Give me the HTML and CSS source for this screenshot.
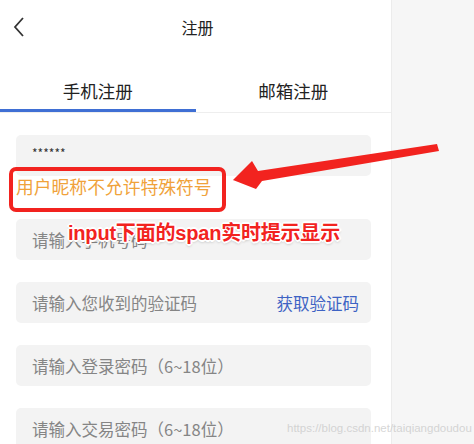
FILE: index.html
```html
<!DOCTYPE html>
<html>

<head>
    <meta charset="utf-8">
    <title>注册</title>
    <link rel="stylesheet" href="styles.css">
</head>

<body>
    <div class="page">
        <div class="phone">
            <div class="header">
                <svg class="back" width="14" height="22" viewBox="0 0 14 22">
                    <path d="M11 2 L3 11 L11 20" fill="none" stroke="#333" stroke-width="1.8" />
                </svg>
                <h2>注册</h2>
            </div>
            <div class="tabs">
                <div class="tab active">手机注册</div>
                <div class="tab">邮箱注册</div>
            </div>
            <div class="form">
                <div class="input-box">
                    <input type="text" class="nickname" value="******">
                </div>
                <span class="tip">用户昵称不允许特殊符号</span>
                <div class="input-box">
                    <input type="text" placeholder="请输入手机号码">
                </div>
                <div class="input-box">
                    <input type="text" placeholder="请输入您收到的验证码">
                    <a href="#">获取验证码</a>
                </div>
                <div class="input-box">
                    <input type="password" placeholder="请输入登录密码（6~18位）">
                </div>
                <div class="input-box">
                    <input type="password" placeholder="请输入交易密码（6~18位）">
                </div>
            </div>

            <!-- 标注 -->
            <div class="mark-box"></div>
            <p class="mark-text">input下面的span实时提示显示</p>
        </div>
        <div class="side"></div>
        <svg class="arrow" width="474" height="444" viewBox="0 0 474 444">
            <polygon points="233,180 252,161 258,171 437,144 439,151 262,181 256,189" fill="#f2231f" />
        </svg>
        <p class="watermark">https://blog.csdn.net/taiqiangdoudou</p>
    </div>
</body>
</html>
```

FILE: styles.css
```css
* {
    margin: 0;
    padding: 0;
    box-sizing: border-box;
}
body {
    background: #fff;
    font-family: "Noto Sans CJK SC", "Noto Sans", sans-serif;
}
.page {
    position: relative;
    display: flex;
    width: 474px;
    height: 444px;
    overflow: hidden;
}
.phone {
    position: relative;
    width: 391px;
    background: #fff;
}
.side {
    flex: 1;
    background: #f6f6f6;
    border-left: 1px solid #ececec;
}
.header {
    position: relative;
    height: 54px;
    display: flex;
    align-items: center;
    justify-content: center;
}
.header .back {
    position: absolute;
    left: 12px;
    top: 16px;
}
.header h2 {
    font-size: 16px;
    font-weight: normal;
    color: #222;
    margin-left: 4px;
}
.tabs {
    display: flex;
    margin-top: 19px;
    border-bottom: 1px solid #eee;
}
.tabs .tab {
    flex: 1;
    text-align: center;
    font-size: 17.5px;
    color: #222;
    height: 39px;
    line-height: 36px;
}
.tabs .tab.active {
    border-bottom: 3px solid #3f6fd4;
    margin-bottom: -1px;
}
.form {
    padding: 22px 20px 0 16px;
}
.input-box {
    display: flex;
    align-items: center;
    height: 41px;
    padding: 0 12px 0 16px;
    margin-bottom: 22px;
    background: #f3f3f3;
    border-radius: 5px;
}
.input-box input {
    flex: 1;
    min-width: 0;
    border: none;
    outline: none;
    background: transparent;
    font-family: inherit;
    font-size: 16.5px;
    color: #333;
}
.input-box input::placeholder {
    color: #858585;
}
.input-box .nickname {
    font-size: 12px;
    margin-top: -6px;
}
.input-box a {
    text-decoration: none;
    color: #3e63c4;
    font-size: 16.5px;
}
.form .tip {
    display: block;
    height: 21px;
    line-height: 21px;
    margin: -22px 0 22px 0;
    color: #f0a23a;
    font-size: 17.8px;
}
.mark-box {
    position: absolute;
    left: 9px;
    top: 167px;
    width: 217px;
    height: 45px;
    border: 4px solid #f2231f;
    border-radius: 7px;
}
.mark-text {
    position: absolute;
    left: 68px;
    top: 217px;
    font-size: 20px;
    font-weight: bold;
    color: #f2231f;
    letter-spacing: -0.2px;
    text-shadow: 2px 0 0 #fff, -2px 0 0 #fff, 0 2px 0 #fff, 0 -2px 0 #fff, 1px 1px 0 #fff, -1px -1px 0 #fff, 1px -1px 0 #fff, -1px 1px 0 #fff, 0 2px 3px rgba(0, 0, 0, .3);
    font-family: "Liberation Sans", "Noto Sans CJK SC", sans-serif;
}
.arrow {
    position: absolute;
    left: 0;
    top: 0;
}
.watermark {
    position: absolute;
    left: 287px;
    top: 422px;
    font-size: 11.5px;
    color: rgba(200, 200, 200, .75);
    font-family: "Liberation Sans", sans-serif;
}
```
